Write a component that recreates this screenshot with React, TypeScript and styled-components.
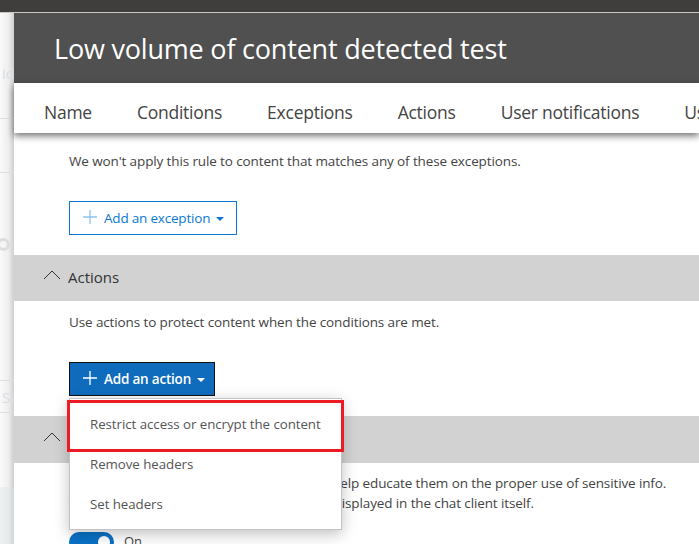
import React from "react";
import styled, { createGlobalStyle } from "styled-components";

const Global = createGlobalStyle`
  html, body { margin: 0; padding: 0; background: #fff; }
  body { font-family: "Open Sans", "Noto Sans", sans-serif; }
  #root { width: 699px; height: 544px; overflow: hidden; }
`;

const Page = styled.div`
  width: 699px;
  height: 544px;
  overflow: hidden;
  display: flex;
  flex-direction: column;
  background: #ebebeb;
`;

const TopBar = styled.div`
  height: 12px;
  flex: none;
  background: #3f3e3c;
  border-bottom: 1px solid #c8c8c8;
`;

const Body = styled.div`
  flex: 1;
  min-height: 0;
  display: flex;
`;

const Backdrop = styled.div`
  width: 14px;
  flex: none;
  position: relative;
  overflow: hidden;
  background: linear-gradient(90deg, #fafafa 0%, #eeeeee 60%, #cfcfcf 100%);
`;

const BackdropTint = styled.div`
  position: absolute;
  left: 0;
  right: 0;
  top: 474px;
  bottom: 0;
  background: rgba(214, 226, 226, 0.35);
`;

const BackdropText = styled.span<{ $top: number }>`
  position: absolute;
  left: 2px;
  top: ${(p) => p.$top}px;
  font-size: 15px;
  line-height: 18px;
  color: #d9dde3;
`;

const BackdropRule = styled.div<{ $top: number }>`
  position: absolute;
  left: 0;
  right: 0;
  top: ${(p) => p.$top}px;
  height: 1px;
  background: #dedede;
`;

const BackdropRing = styled.div`
  position: absolute;
  left: -3px;
  top: 225px;
  width: 7px;
  height: 7px;
  border: 3px solid #dfdbdf;
  border-radius: 50%;
`;

const Panel = styled.div`
  flex: 1;
  min-width: 0;
  position: relative;
  display: flex;
  flex-direction: column;
  background: #fff;
`;

const Header = styled.div`
  height: 70px;
  flex: none;
  display: flex;
  align-items: center;
  padding-left: 40px;
  background: #505050;
`;

const Title = styled.h1`
  margin: 0;
  font-size: 27px;
  font-weight: 400;
  color: #fff;
  white-space: nowrap;
  letter-spacing: -0.2px;
`;

const Tabs = styled.div`
  height: 50px;
  box-sizing: border-box;
  flex: none;
  display: flex;
  align-items: center;
  gap: 45px;
  padding: 8px 0 0 30px;
  background: #fff;
  box-shadow: 0 3px 7px rgba(0, 0, 0, 0.55);
  position: relative;
  z-index: 1;
  white-space: nowrap;
`;

const Tab = styled.span`
  font-size: 17.5px;
  color: #444;
  letter-spacing: -0.25px;
`;

const Intro = styled.p<{ $top: number }>`
  margin: 0;
  padding: ${(p) => p.$top}px 0 0 55px;
  font-size: 13.5px;
  line-height: 20px;
  color: #444;
  white-space: nowrap;
  letter-spacing: -0.12px;
`;

const IntroLine = styled.span`
  display: block;
`;

const AddButton = styled.button<{ $active?: boolean }>`
  display: flex;
  align-items: center;
  width: ${(p) => (p.$active ? 146 : 168)}px;
  height: 34px;
  padding: 0 0 0 12px;
  gap: 6px;
  font-family: inherit;
  font-size: 13.5px;
  font-weight: ${(p) => (p.$active ? 600 : 400)};
  letter-spacing: -0.2px;
  color: ${(p) => (p.$active ? "#fff" : "#0a78d4")};
  background: ${(p) => (p.$active ? "#0f6cbd" : "#fff")};
  border: 1px solid ${(p) => (p.$active ? "#111" : "#0a78d4")};
  border-radius: 0;
`;

const PlusMark = styled.svg`
  margin-top: -3px;
  flex: none;
`;

const ButtonRow = styled.div<{ $top: number }>`
  margin: ${(p) => p.$top}px 0 0 55px;
`;

const Caret = styled.span`
  width: 0;
  height: 0;
  margin-top: 2px;
  border-left: 4px solid transparent;
  border-right: 4px solid transparent;
  border-top: 4px solid currentColor;
`;

const SectionBar = styled.div<{ $top: number; $height: number }>`
  height: ${(p) => p.$height}px;
  box-sizing: border-box;
  margin-top: ${(p) => p.$top}px;
  flex: none;
  display: flex;
  align-items: center;
  gap: 7px;
  padding: 0 0 2px 29px;
  background: #d2d2d2;
  font-size: 15px;
  color: #333;
`;

const ChevronMark = styled.svg`
  margin-bottom: 4px;
  flex: none;
`;

const ToggleRow = styled.div`
  display: flex;
  align-items: flex-start;
  gap: 10px;
  margin: 19px 0 0 55px;
  font-size: 13px;
  line-height: 18px;
  color: #444;
`;

const Toggle = styled.span`
  width: 45px;
  height: 20px;
  flex: none;
  border-radius: 10px;
  background: #0a72c7;
  display: flex;
  justify-content: flex-end;
  align-items: center;
  padding-right: 4px;
  box-sizing: border-box;
`;

const Knob = styled.span`
  width: 12px;
  height: 12px;
  border-radius: 50%;
  background: #fff;
`;

const Menu = styled.div`
  position: absolute;
  left: 55px;
  top: 385px;
  width: 273px;
  height: 132px;
  padding-top: 5px;
  box-sizing: border-box;
  display: flex;
  flex-direction: column;
  background: #fff;
  border: 1px solid #c4c4c4;
  box-shadow: 0 4px 14px rgba(0, 0, 0, 0.25);
  z-index: 2;
`;

const MenuItem = styled.div`
  height: 40px;
  flex: none;
  display: flex;
  align-items: center;
  padding-left: 20px;
  font-size: 13.3px;
  color: #555;
  white-space: nowrap;
  letter-spacing: -0.05px;
`;

const Highlight = styled.div`
  position: absolute;
  left: 53px;
  top: 387px;
  width: 277px;
  height: 52px;
  box-sizing: border-box;
  border: 3px solid #ed1c24;
  z-index: 3;
  pointer-events: none;
`;

const Chevron = () => (
  <ChevronMark width="18" height="10" viewBox="0 0 18 10" fill="none" stroke="#333" strokeWidth="1">
    <path d="M1 9 L9 1 L17 9" />
  </ChevronMark>
);

const Plus = ({ color }: { color: string }) => (
  <PlusMark width="16" height="16" viewBox="0 0 16 16" stroke={color} strokeWidth="1.3" fill="none">
    <path d="M8 1 V15 M1 8 H15" />
  </PlusMark>
);

export default function App() {
  return (
    <Page>
      <Global />
      <TopBar />
      <Body>
        <Backdrop>
          <BackdropTint />
          <BackdropText $top={51}>id</BackdropText>
          <BackdropRule $top={105} />
          <BackdropRule $top={159} />
          <BackdropRing />
          <BackdropRule $top={367} />
          <BackdropText $top={375}>Se</BackdropText>
          <BackdropRule $top={399} />
        </Backdrop>
        <Panel>
          <Header>
            <Title>Low volume of content detected test</Title>
          </Header>
          <Tabs>
            <Tab>Name</Tab>
            <Tab>Conditions</Tab>
            <Tab>Exceptions</Tab>
            <Tab>Actions</Tab>
            <Tab>User notifications</Tab>
            <Tab>User overrides</Tab>
          </Tabs>
          <Intro $top={18}>We won't apply this rule to content that matches any of these exceptions.</Intro>
          <ButtonRow $top={30}>
            <AddButton>
              <Plus color="#8fc3ef" />
              Add an exception
              <Caret />
            </AddButton>
          </ButtonRow>
          <SectionBar $top={20} $height={46}>
            <Chevron />
            Actions
          </SectionBar>
          <Intro $top={11}>Use actions to protect content when the conditions are met.</Intro>
          <ButtonRow $top={30}>
            <AddButton $active>
              <Plus color="#fff" />
              Add an action
              <Caret />
            </AddButton>
          </ButtonRow>
          <SectionBar $top={20} $height={47}>
            <Chevron />
          </SectionBar>
          <Intro $top={10}>
            <IntroLine>
              Use notifications to inform your users and help educate them on the proper use of sensitive info.
            </IntroLine>
            <IntroLine>
              These tips will be shown to your users and displayed in the chat client itself.
            </IntroLine>
          </Intro>
          <ToggleRow>
            <Toggle>
              <Knob />
            </Toggle>
            On
          </ToggleRow>
          <Menu>
            <MenuItem>Restrict access or encrypt the content</MenuItem>
            <MenuItem>Remove headers</MenuItem>
            <MenuItem>Set headers</MenuItem>
          </Menu>
          <Highlight />
        </Panel>
      </Body>
    </Page>
  );
}
